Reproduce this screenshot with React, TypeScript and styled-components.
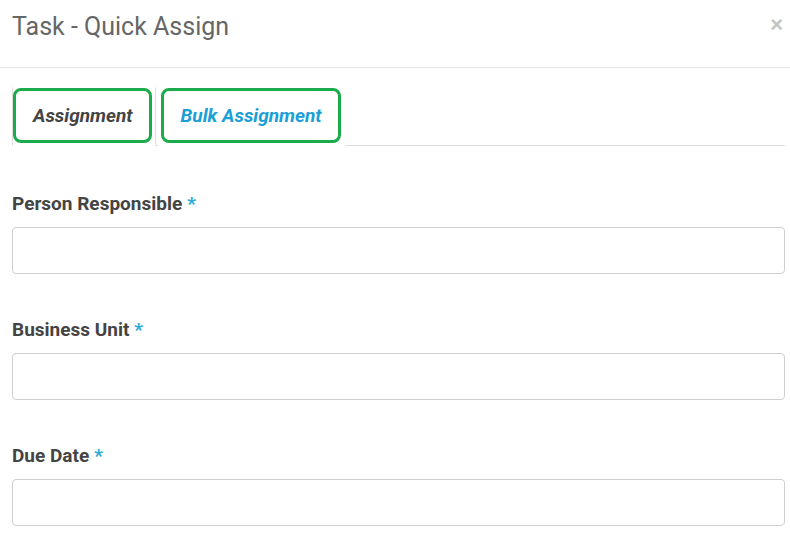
import React from "react";
import styled, { createGlobalStyle } from "styled-components";

const Global = createGlobalStyle`
  html, body { margin: 0; padding: 0; background: #fff; }
  body { font-family: Roboto, "Liberation Sans", Arial, sans-serif; }
  * { box-sizing: border-box; }
`;

const Modal = styled.div`
  width: 790px;
  background: #fff;
`;

const Header = styled.div`
  height: 68px;
  display: flex;
  align-items: flex-start;
  justify-content: space-between;
  padding: 12px 7px 0 12px;
  border-bottom: 1px solid #e6e6e6;
`;

const Title = styled.h4`
  margin: 0;
  font-size: 25px;
  font-weight: 400;
  color: #666;
  line-height: 30px;
`;

const Close = styled.button`
  border: 0;
  background: none;
  padding: 0;
  margin-top: 1px;
  font-size: 22px;
  font-weight: 700;
  line-height: 24px;
  color: #c4c4c4;
  font-family: "Liberation Sans", Arial, sans-serif;
  cursor: pointer;
`;

const Body = styled.div`
  padding: 19px 5px 0 12px;
`;

const TabList = styled.ul`
  list-style: none;
  margin: 0;
  padding: 0;
  display: flex;
  height: 59px;
  border-bottom: 1px solid #dedede;
`;

const Tab = styled.li<{ $active?: boolean }>`
  display: flex;
  margin-right: 2px;
  margin-bottom: -1px;
  padding: 0 3px 2px ${(p) => (p.$active ? "0" : "2px")};
  border: 1px solid ${(p) => (p.$active ? "#dedede" : "transparent")};
  border-top-color: transparent;
  border-bottom-color: ${(p) => (p.$active ? "#fff" : "transparent")};
  background: #fff;
`;

const TabLink = styled.a<{ $active?: boolean }>`
  display: flex;
  align-items: center;
  padding: 0 16px 0 17px;
  border: 3px solid #1aab4b;
  border-radius: 8px;
  font-size: 19px;
  font-weight: 700;
  font-style: italic;
  color: ${(p) => (p.$active ? "#444" : "#1a9fd6")};
  text-decoration: none;
  cursor: pointer;
`;

const Form = styled.div`
  padding-top: 46px;
  display: flex;
  flex-direction: column;
  gap: 44px;
`;

const Field = styled.div`
  display: flex;
  flex-direction: column;
`;

const Label = styled.label`
  font-size: 19px;
  font-weight: 700;
  color: #444;
  line-height: 24px;
  margin-bottom: 11px;
`;

const Req = styled.span`
  color: #29a9d8;
  margin-left: 5px;
`;

const Input = styled.input`
  height: 47px;
  width: 100%;
  border: 1px solid #cfcfcf;
  border-radius: 4px;
  padding: 0 12px;
  font-size: 16px;
  font-family: inherit;
  outline: none;
`;

const fields = ["Person Responsible", "Business Unit", "Due Date"];

export default function App() {
  return (
    <Modal>
      <Global />
      <Header>
        <Title>Task - Quick Assign</Title>
        <Close aria-label="Close">×</Close>
      </Header>
      <Body>
        <TabList>
          <Tab $active>
            <TabLink $active>Assignment</TabLink>
          </Tab>
          <Tab>
            <TabLink>Bulk Assignment</TabLink>
          </Tab>
        </TabList>
        <Form>
          {fields.map((f) => (
            <Field key={f}>
              <Label>
                {f}
                <Req>*</Req>
              </Label>
              <Input />
            </Field>
          ))}
        </Form>
      </Body>
    </Modal>
  );
}
